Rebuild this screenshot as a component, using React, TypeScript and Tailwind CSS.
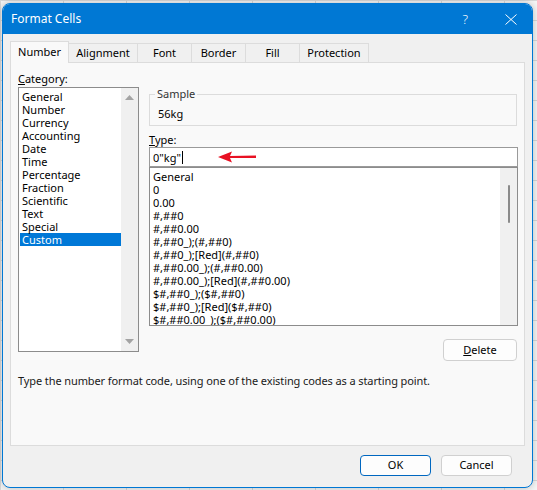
import React from "react";

const CATEGORIES = [
  "General",
  "Number",
  "Currency",
  "Accounting",
  "Date",
  "Time",
  "Percentage",
  "Fraction",
  "Scientific",
  "Text",
  "Special",
  "Custom",
];

const FORMATS = [
  "General",
  "0",
  "0.00",
  "#,##0",
  "#,##0.00",
  "#,##0_);(#,##0)",
  "#,##0_);[Red](#,##0)",
  "#,##0.00_);(#,##0.00)",
  "#,##0.00_);[Red](#,##0.00)",
  "$#,##0_);($#,##0)",
  "$#,##0_);[Red]($#,##0)",
  "$#,##0.00_);($#,##0.00)",
];

const TABS = [
  { label: "Number", w: "w-[59px]" },
  { label: "Alignment", w: "w-[69px]" },
  { label: "Font", w: "w-[54px]" },
  { label: "Border", w: "w-[54px]" },
  { label: "Fill", w: "w-[54px]" },
  { label: "Protection", w: "w-[69px]" },
];

export default function App() {
  return (
    <div className="w-[537px] h-[490px] overflow-hidden pt-[3px] pl-[2px] bg-[#f7f7f7] bg-[linear-gradient(to_right,#d9d9d9_1px,transparent_1px),linear-gradient(to_bottom,#d9d9d9_1px,transparent_1px)] bg-[size:63px_20px] font-['Noto_Sans',sans-serif] text-[11px] text-black">
      <div className="w-[531px] h-[485px] rounded-[8px] border border-[#0078d4] bg-[#f0f0f0] overflow-hidden flex flex-col shadow-[0_0_8px_rgba(0,0,0,0.25)]">
        {/* Title bar */}
        <div className="h-[30px] shrink-0 bg-[#0078d4] text-white flex items-center pl-[8px]">
          <span className="text-[12px] leading-none">Format Cells</span>
          <span className="ml-auto text-[13px] font-light leading-none mr-[37px]">?</span>
          <svg width="12" height="11" viewBox="0 0 12 11" className="mr-[15px]">
            <path d="M0.5 0.5 L11.5 10.5 M11.5 0.5 L0.5 10.5" stroke="white" strokeWidth="1" fill="none" />
          </svg>
        </div>

        <div className="px-[7px] pt-[7px] flex flex-col">
          {/* Tabs */}
          <div className="flex items-end h-[21px]">
            {TABS.map((t, i) =>
              i === 0 ? (
                <div
                  key={t.label}
                  className={`${t.w} h-[22px] -mb-px relative z-10 bg-[#f9f9f9] border border-b-0 border-[#dcdcdc] flex items-center justify-center`}
                >
                  {t.label}
                </div>
              ) : (
                <div
                  key={t.label}
                  className={`${t.w} h-[19px] bg-[#f0f0f0] border-t border-r border-[#dcdcdc] flex items-center justify-center`}
                >
                  {t.label}
                </div>
              )
            )}
          </div>

          {/* Panel */}
          <div className="h-[384px] bg-[#f9f9f9] border border-[#dcdcdc] pl-[7px] pr-[5px]">
            <div className="flex gap-[10px]">
              {/* Category column */}
              <div className="w-[121px] flex flex-col">
                <div className="mt-[8px] h-[15px] leading-[15px]">
                  <span className="underline">C</span>ategory:
                </div>
                <div className="mt-[1px] h-[265px] border border-[#8c8c8c] bg-white flex">
                  <div className="flex-1 pt-[2px] pl-[1px]">
                    {CATEGORIES.map((c) => (
                      <div
                        key={c}
                        className={`h-[13px] leading-[13px] px-[2px] ${
                          c === "Custom" ? "bg-[#0078d7] text-white" : ""
                        }`}
                      >
                        {c}
                      </div>
                    ))}
                  </div>
                  <div className="w-[17px] bg-[#f0f0f0] flex flex-col items-center justify-between py-[7px]">
                    <svg width="9" height="5" viewBox="0 0 9 5">
                      <path d="M4.5 0 L9 5 L0 5 Z" fill="#a3a3a3" />
                    </svg>
                    <svg width="9" height="5" viewBox="0 0 9 5">
                      <path d="M0 0 L9 0 L4.5 5 Z" fill="#a3a3a3" />
                    </svg>
                  </div>
                </div>
              </div>

              {/* Right column */}
              <div className="w-[369px] flex flex-col">
                <div className="mt-[31px] mr-[1px] h-[32px] border border-[#dcdcdc] relative pl-[8px] pt-[12px] leading-[14px]">
                  <span className="absolute -top-[8px] left-[5px] px-[2px] bg-[#f9f9f9] leading-[14px] text-[#333]">
                    Sample
                  </span>
                  56kg
                </div>

                <div className="mt-[6px] h-[15px] leading-[15px]">
                  <span className="underline">T</span>ype:
                </div>
                <div className="h-[20px] border border-[#9a9a9a] bg-white relative flex items-center pl-[3px]">
                  <span className="leading-[13px]">0"kg"</span>
                  <span className="w-px h-[13px] bg-black ml-[1px]" />
                  <svg
                    width="40"
                    height="12"
                    viewBox="0 0 40 12"
                    className="absolute left-[68px] top-[3px]"
                  >
                    <path d="M0 6 L14 0.5 L12 5 L38 4.5 L38 7 L12 7 L14 11.5 Z" fill="#e81123" />
                  </svg>
                </div>
                <div className="h-[159px] border border-[#8c8c8c] bg-white flex overflow-hidden">
                  <div className="flex-1 pt-[2px] pl-[3px] overflow-hidden">
                    {FORMATS.map((f) => (
                      <div key={f} className="h-[13px] leading-[13px] whitespace-nowrap">
                        {f}
                      </div>
                    ))}
                  </div>
                  <div className="w-[17px] bg-[#f0f0f0] flex justify-center pt-[17px]">
                    <div className="w-[2px] h-[38px] rounded-full bg-[#8a8a8a]" />
                  </div>
                </div>

                <button className="self-end mr-[1px] mt-[13px] w-[74px] h-[22px] rounded-[4px] border border-[#d0d0d0] bg-[#fdfdfd]">
                  <span className="underline">D</span>elete
                </button>
              </div>
            </div>

            <p className="mt-[13px] leading-[14px] tracking-[-0.1px] text-[#1a1a1a]">
              Type the number format code, using one of the existing codes as a starting point.
            </p>
          </div>

          {/* Footer buttons */}
          <div className="mt-[9px] flex justify-end gap-[10px] pr-[13px]">
            <button className="w-[71px] h-[21px] rounded-[4px] border border-[#0067c0] bg-[#fdfdfd]">
              OK
            </button>
            <button className="w-[71px] h-[21px] rounded-[4px] border border-[#d0d0d0] bg-[#fdfdfd]">
              Cancel
            </button>
          </div>
        </div>
      </div>
    </div>
  );
}
